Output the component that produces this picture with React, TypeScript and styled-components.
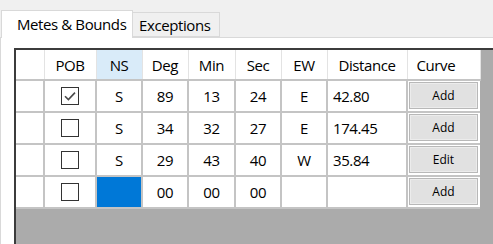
import styled, { createGlobalStyle } from 'styled-components'

type Row = {
  pob: boolean
  ns: string
  deg: string
  min: string
  sec: string
  ew: string
  dist: string
  curve: string
  selectedNs?: boolean
}

const rows: Row[] = [
  { pob: true, ns: 'S', deg: '89', min: '13', sec: '24', ew: 'E', dist: '42.80', curve: 'Add' },
  { pob: false, ns: 'S', deg: '34', min: '32', sec: '27', ew: 'E', dist: '174.45', curve: 'Add' },
  { pob: false, ns: 'S', deg: '29', min: '43', sec: '40', ew: 'W', dist: '35.84', curve: 'Edit' },
  { pob: false, ns: '', deg: '00', min: '00', sec: '00', ew: '', dist: '', curve: 'Add', selectedNs: true },
]

const columns = [
  { key: 'head', title: '', width: 28 },
  { key: 'pob', title: 'POB', width: 52 },
  { key: 'ns', title: 'NS', width: 46 },
  { key: 'deg', title: 'Deg', width: 46 },
  { key: 'min', title: 'Min', width: 47 },
  { key: 'sec', title: 'Sec', width: 46 },
  { key: 'ew', title: 'EW', width: 46 },
  { key: 'dist', title: 'Distance', width: 80 },
  { key: 'curve', title: 'Curve', width: 73 },
]

const App = () => {
  return (
    <Window>
      <GlobalStyle />
      <TabStrip>
        <Tab $active>Metes &amp; Bounds</Tab>
        <Tab>Exceptions</Tab>
      </TabStrip>
      <Page>
        <Grid>
          <Table>
            <colgroup>
              {columns.map(c => (
                <col key={c.key} style={{ width: c.width }} />
              ))}
            </colgroup>
            <thead>
              <tr>
                {columns.map(c => (
                  <HeadCell key={c.key} $selected={c.key === 'ns'} $left={c.key === 'curve'}>
                    {c.title}
                  </HeadCell>
                ))}
              </tr>
            </thead>
            <tbody>
              {rows.map((r, i) => (
                <BodyRow key={i} $last={i === rows.length - 1}>
                  <RowHeader />
                  <Cell>
                    <CheckBox>
                      {r.pob && (
                        <svg width="14" height="14" viewBox="0 0 14 14">
                          <path d="M2 7.2 L5.4 10.6 L12 3.6" fill="none" stroke="#4a4a4a" strokeWidth="1.6" />
                        </svg>
                      )}
                    </CheckBox>
                  </Cell>
                  <Cell $selected={r.selectedNs}>{r.ns}</Cell>
                  <Cell>{r.deg}</Cell>
                  <Cell>{r.min}</Cell>
                  <Cell>{r.sec}</Cell>
                  <Cell>{r.ew}</Cell>
                  <Cell $left>{r.dist}</Cell>
                  <ButtonCell>
                    <GridButton>{r.curve}</GridButton>
                  </ButtonCell>
                </BodyRow>
              ))}
            </tbody>
          </Table>
        </Grid>
      </Page>
    </Window>
  )
}

const GlobalStyle = createGlobalStyle`
  html, body {
    margin: 0;
    padding: 0;
    background: #f0f0f0;
  }
  body {
    font-family: "Open Sans", "Noto Sans", sans-serif;
    color: #000;
  }
`
const Window = styled.div`
  width: 493px;
  height: 244px;
  display: flex;
  flex-direction: column;
  overflow: hidden;
  background: #f0f0f0;
`
const TabStrip = styled.div`
  display: flex;
  align-items: flex-end;
  height: 37px;
  padding-left: 1px;
  box-sizing: border-box;
`
const Tab = styled.div<{ $active?: boolean }>`
  box-sizing: border-box;
  height: ${p => (p.$active ? 28 : 25)}px;
  margin-bottom: ${p => (p.$active ? -1 : 0)}px;
  width: ${p => (p.$active ? 132 : 87)}px;
  padding-left: ${p => (p.$active ? 15 : 6)}px;
  padding-top: ${p => (p.$active ? 3 : 2)}px;
  font-size: 15px;
  letter-spacing: -0.4px;
  background: ${p => (p.$active ? '#fff' : '#f0f0f0')};
  border: 1px solid #d9d9d9;
  border-bottom: ${p => (p.$active ? 'none' : '1px solid #d9d9d9')};
  border-left: ${p => (p.$active ? '1px solid #d9d9d9' : 'none')};
  position: relative;
  z-index: ${p => (p.$active ? 1 : 0)};
`
const Page = styled.div`
  flex: 1;
  display: flex;
  background: #fff;
  border-top: 1px solid #d9d9d9;
  border-left: 1px solid #d9d9d9;
  padding: 10px 0 0 13px;
  min-height: 0;
`
const Grid = styled.div`
  flex: 1;
  background: #ababab;
  border-left: 2px solid #3c3c3c;
  border-top: 2px solid #3c3c3c;
  overflow: hidden;
`
const Table = styled.table`
  border-collapse: collapse;
  table-layout: fixed;
  width: 464px;
  font-size: 15px;
`
const HeadCell = styled.th<{ $selected?: boolean; $left?: boolean }>`
  height: 30px;
  padding: 0 0 0 ${p => (p.$left ? 9 : 0)}px;
  font-weight: normal;
  text-align: ${p => (p.$left ? 'left' : 'center')};
  background: ${p => (p.$selected ? '#d9ebf9' : '#fff')};
  border-right: 1px solid #e3e3e3;
  border-bottom: 2px solid #c4c4c4;
  box-sizing: border-box;
  letter-spacing: -0.4px;
`
const BodyRow = styled.tr<{ $last?: boolean }>`
  height: ${p => (p.$last ? 31 : 32)}px;
`
const RowHeader = styled.td`
  background: #fff;
  padding: 0;
  border-right: 2px solid #c4c4c4;
  border-bottom: 2px solid #c4c4c4;
`
const Cell = styled.td<{ $selected?: boolean; $left?: boolean }>`
  padding: 0 0 0 ${p => (p.$left ? 5 : 0)}px;
  text-align: ${p => (p.$left ? 'left' : 'center')};
  background: ${p => (p.$selected ? '#0078d7' : '#fff')};
  border-right: 2px solid #c4c4c4;
  border-bottom: 2px solid #c4c4c4;
  letter-spacing: -0.4px;
`
const ButtonCell = styled.td`
  padding: 1px 2px 2px 1px;
  background: #fff;
  border-bottom: 2px solid #c4c4c4;
`
const GridButton = styled.div`
  height: 27px;
  display: flex;
  align-items: center;
  justify-content: center;
  box-sizing: border-box;
  background: #e1e1e1;
  border: 1px solid #b8b8b8;
  box-shadow: inset 0 0 0 1px #ececec;
  font-size: 12px;
`
const CheckBox = styled.div`
  width: 18px;
  height: 18px;
  margin: 0 auto;
  box-sizing: border-box;
  border: 1.5px solid #333;
  background: #fff;
  display: flex;
  align-items: center;
  justify-content: center;
`

export default App
